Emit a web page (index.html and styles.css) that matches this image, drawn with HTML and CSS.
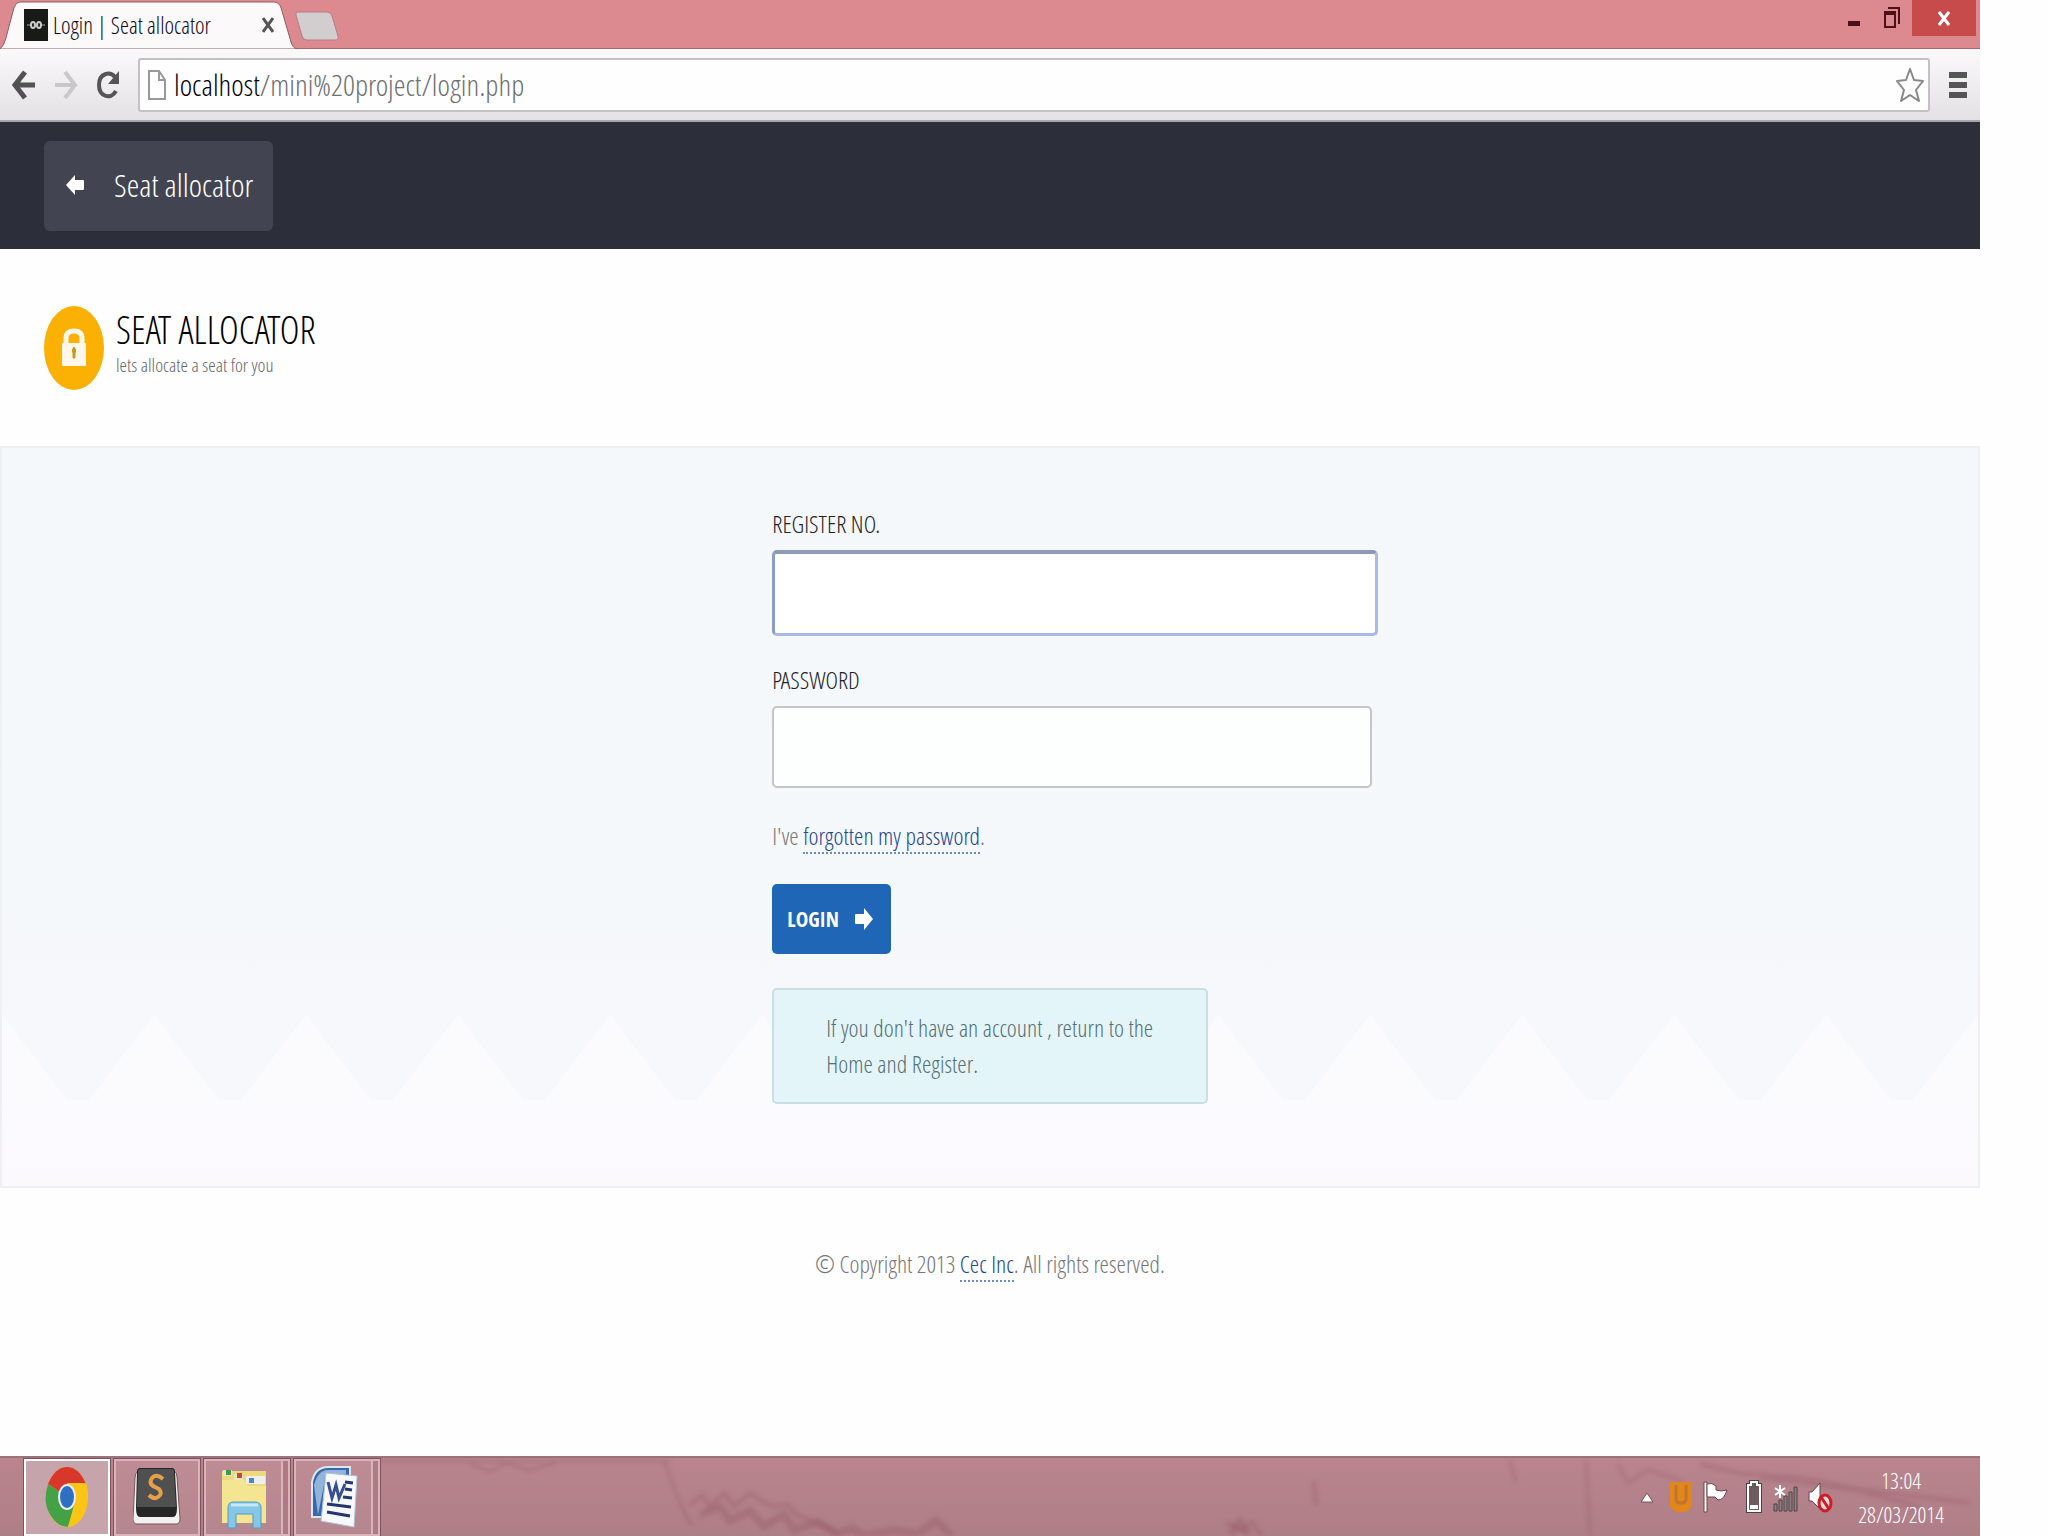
FILE: index.html
```html
<!DOCTYPE html>
<html lang="en">

<head>
    <meta charset="UTF-8">
    <title>Login | Seat allocator</title>
    <link rel="stylesheet" href="styles.css">
</head>

<body>

    <div class="screen">
        <div class="titlebar">
            <div class="tab">
                <svg class="tab-shape" viewBox="0 0 300 49" preserveAspectRatio="none" aria-hidden="true">
                    <path d="M0 49 Q4 46 6 38 L14 8 Q16 2 20 2 H276 Q281 2 283 8 L293 42 Q295 49 300 49Z" fill="#fbf9fa" stroke="#8f5b62" />
                </svg>
                <svg class="favicon" viewBox="0 0 24 32" aria-hidden="true">
                    <rect width="24" height="32" fill="#171a17" />
                    <path d="M3 16h3M18 16h3" stroke="#aaa" />
                    <ellipse cx="9" cy="16" rx="2" ry="3" fill="none" stroke="#ccc" stroke-width="2" />
                    <ellipse cx="15" cy="16" rx="2" ry="3" fill="none" stroke="#ccc" stroke-width="2" />
                </svg>
                <span class="tab-title">Login | Seat allocator</span>
                <button class="tab-close" aria-label="Close tab">
                    <svg width="12" height="16" viewBox="0 0 12 16"><path d="M1 1l10 14M11 1L1 15" stroke="#555" stroke-width="3" /></svg>
                </button>
            </div>
            <button class="new-tab" aria-label="New tab">
                <svg width="44" height="30" viewBox="0 0 44 30"><path d="M3 1H32Q36 1 37 5L43 25Q44 29 40 29H12Q8 29 7 25L1 4Q0 1 3 1Z" fill="#d2cecf" stroke="#b77c84" /></svg>
            </button>
            <div class="window-buttons">
                <button class="win-btn" aria-label="Minimize">
                    <svg width="12" height="24" viewBox="0 0 12 24"><path d="M0 15h12v5H0z" fill="#4b1018" /></svg>
                </button>
                <button class="win-btn" aria-label="Restore">
                    <svg width="16" height="22" viewBox="0 0 16 22"><path d="M4 1h11v16M1 5h10v15H1zM1 7h10" fill="none" stroke="#4b1018" stroke-width="2" /></svg>
                </button>
                <button class="win-btn win-close" aria-label="Close">
                    <svg width="12" height="15" viewBox="0 0 12 15"><path d="M1 1l10 13M11 1L1 14" stroke="#fff" stroke-width="3" /></svg>
                </button>
            </div>
        </div>

        <div class="toolbar">
            <button class="nav-btn" aria-label="Back">
                <svg width="24" height="30" viewBox="0 0 24 30"><path d="M23 15H4M13 2L3 15l10 13" fill="none" stroke="#525252" stroke-width="5" /></svg>
            </button>
            <button class="nav-btn" aria-label="Forward">
                <svg width="24" height="30" viewBox="0 0 24 30"><path d="M1 15h19M11 2l10 13-10 13" fill="none" stroke="#c9c8c9" stroke-width="4" /></svg>
            </button>
            <button class="nav-btn" aria-label="Reload">
                <svg width="24" height="30" viewBox="0 0 24 30"><path d="M19 7C14 1 3 3 3 15s12 15 17 6" fill="none" stroke="#555" stroke-width="4" /><path d="M23 1v13H12z" fill="#555" /></svg>
            </button>
            <div class="omnibox">
                <svg width="18" height="30" viewBox="0 0 18 30" aria-hidden="true"><path d="M1 1h10l6 9v19H1zM11 1v9h6" fill="#fff" stroke="#999" stroke-width="2" /></svg>
                <span class="url"><span class="url-host">localhost</span>/mini%20project/login.php</span>
                <button class="star" aria-label="Bookmark this page">
                    <svg width="28" height="36" viewBox="0 0 28 36"><path d="M14 2l4 11 9 1-7 9 3 11-9-6-9 6 3-11-7-9 9-1z" fill="#fff" stroke="#888" stroke-width="2" stroke-linejoin="round" /></svg>
                </button>
            </div>
            <button class="menu-btn" aria-label="Menu">
                <svg width="20" height="28" viewBox="0 0 20 28"><path d="M1 4h18M1 14h18M1 24h18" stroke="#555" stroke-width="6" /></svg>
            </button>
        </div>

        <nav class="topnav">
            <a href="#" class="back-link">
                <svg width="18" height="20" viewBox="0 0 18 20" aria-hidden="true"><path d="M0 10L9 0v5h8q1 0 1 1v8q0 1-1 1H9v5z" fill="#fff" /></svg>
                Seat allocator
            </a>
        </nav>

        <header class="brand">
            <svg class="brand-icon" viewBox="0 0 60 84" aria-hidden="true">
                <ellipse cx="30" cy="42" rx="30" ry="42" fill="#fbb004" />
                <path d="M22 38V32Q22 25 30 25t8 7v6" fill="none" stroke="#fff8ea" stroke-width="5" />
                <rect x="18" y="37" width="24" height="23" rx="1" fill="#fff8ea" />
                <path d="M30 41q3 3 1 6v5h-2v-5q-2-3 1-6z" fill="#c99a22" stroke="#c99a22" />
            </svg>
            <div class="brand-text">
                <h1>SEAT ALLOCATOR</h1>
                <p>lets allocate a seat for you</p>
            </div>
        </header>

        <main class="panel">
            <form class="login-form">
                <label for="register">REGISTER NO.</label>
                <input type="text" id="register" class="active">

                <label for="password">PASSWORD</label>
                <input type="password" id="password">

                <p class="forgot">I've <a href="#">forgotten my password</a>.</p>

                <button type="button" class="login-btn">
                    LOGIN
                    <svg width="18" height="22" viewBox="0 0 18 22" aria-hidden="true"><path d="M18 11L9 0v6H1Q0 6 0 7v8q0 1 1 1h8v6z" fill="#fff" /></svg>
                </button>

                <div class="note">If you don't have an account , return to the Home and Register.</div>
            </form>
        </main>

        <footer class="copyright">© Copyright 2013 <a href="#">Cec Inc</a>. All rights reserved.</footer>

        <div class="taskbar">
            <!-- wallpaper showing through the bar -->
            <svg class="wallpaper" viewBox="0 0 1980 80" preserveAspectRatio="none" aria-hidden="true">
                <g fill="none" stroke="#8d4f5c" stroke-opacity=".3">
                    <path d="M380 3h290M470 6l20 8 16-9 24 8 26-8M664 3l8 22 10 26 10 18M1510 3l6 22M1586 3l4 77M1618 6l10 20 20-14 30 10 8 12" stroke-width="3" />
                    <path d="M690 48l12-10 8 12 14-14 10 14 16-14 14 10 12 4 12-2 8 10 14 6 12 4 12 6 8 10M1314 24l2 24M1226 66l16 8 10-8 10 14M1700 6l40 10 60 4 60 12 110 14M1760 20l100 14 60 16" stroke-width="4" />
                    <path d="M700 58l20-8 10 14 20-10 14 16 20-12 10 16 24-8 18 12 16-6 12 8 30-6 24 4 18-14 16 16M1230 78l10-12 8 12" stroke-width="8" />
                </g>
            </svg>

            <div class="apps">
                <button class="app running" aria-label="Google Chrome">
                    <svg width="44" height="64" viewBox="0 0 44 64">
                        <ellipse cx="22" cy="32" rx="21" ry="30" fill="#fbc516" />
                        <path d="M22 32L3 19Q10 2 22 2t19 17z" fill="#d8382b" />
                        <path d="M3 19Q-3 38 6 51q7 11 17 11l6-22-7-8z" fill="#45a146" />
                        <path d="M22 18h19q4 12 0 24-5 19-18 20l8-23z" fill="#fbc516" />
                        <ellipse cx="22" cy="32" rx="9" ry="13" fill="#e9edf5" />
                        <ellipse cx="22" cy="32" rx="7" ry="11" fill="#2f6fc0" />
                    </svg>
                </button>
                <button class="app" aria-label="Sublime Text">
                    <svg width="48" height="64" viewBox="0 0 48 64">
                        <path d="M5 6Q2 8 2 13L0 54q0 5 4 5h39q4 0 4-5L44 12q0-5-3-6z" fill="#f2f0f0" stroke="#7a555b" />
                        <path d="M7 3h32q3 0 3 4l2 36q0 9-4 9H7q-4 0-4-9L4 7q0-4 3-4z" fill="#262626" />
                        <path d="M7 4h32q2 0 2 3l2 35H4L5 7q0-3 2-3z" fill="#505050" />
                        <path d="M30 14q-7-6-11-1-4 6 3 9l4 2q4 5-1 8-4 3-9-2" fill="none" stroke="#e6a04a" stroke-width="4" />
                    </svg>
                </button>
                <button class="app stacked" aria-label="File Explorer">
                    <svg width="48" height="64" viewBox="0 0 48 64">
                        <path d="M2 6h44v52H2z" fill="#ecd979" />
                        <path d="M3 5h9v6H3zM14 9h9v6h-9z" fill="#e8e6c4" />
                        <path d="M6 5h5v5H6z" fill="#3d9a4a" /><path d="M17 8h5v5h-5z" fill="#c9472f" />
                        <path d="M26 11h19v8H26z" fill="#eee" /><path d="M29 13h5v5h-5z" fill="#4c88c6" />
                        <path d="M2 15h22l4 6h18v37H2z" fill="#f4e592" />
                        <path d="M8 63V43q0-6 5-6h22q6 0 6 6v20h-8V49H16v14z" fill="#86c6e6" stroke="#529cc3" />
                        <path d="M11 40h27" stroke="#c6e8f5" stroke-width="3" />
                    </svg>
                </button>
                <button class="app stacked" aria-label="Microsoft Word">
                    <svg width="48" height="64" viewBox="0 0 48 64">
                        <path d="M2 52V17Q5 2 18 2h22v50z" fill="#3768a9" stroke="#dce7f4" stroke-width="2" />
                        <path d="M4 20Q8 5 18 5h18v4L16 10 8 50z" fill="#91b3dc" />
                        <path d="M16 8l31 3-3 51-33-6z" fill="#f6f8fc" stroke="#b6c2d6" />
                        <path d="M18 17l4 16 4-13 3 13 6-14" fill="none" stroke="#344f93" stroke-width="3" />
                        <path d="M35 17l8 1M35 24l7 1M33 32l9 1M17 39l24 3M17 47l23 4" stroke="#25366c" stroke-width="3" />
                    </svg>
                </button>
            </div>

            <div class="tray">
                <svg class="tray-arrow" width="14" height="12" viewBox="0 0 14 12" aria-hidden="true"><path d="M1 11L7 2l6 9z" fill="#fff" stroke="#76525a" /></svg>
                <svg width="24" height="34" viewBox="0 0 24 34" aria-hidden="true"><path d="M1 2h22v25l-6 5H7l-6-5z" fill="#df861c" /><path d="M7 5v14q0 4 5 4t5-4V5" fill="none" stroke="#c4742a" stroke-width="3" /></svg>
                <svg width="26" height="34" viewBox="0 0 26 34" aria-hidden="true"><path d="M2 2h3v30H2z" fill="#fff" stroke="#6b4249" /><path d="M5 4q5-2 9 2v4q5 2 11 0-3 10-9 10l-3-3H5z" fill="#fff" stroke="#6b4249" /></svg>
                <svg class="battery" width="18" height="34" viewBox="0 0 18 34" aria-hidden="true"><path d="M3 5h3V2h6v3h3v26H3z" fill="#6d5a5d" stroke="#444" stroke-width="4" /><path d="M3 5h3V2h6v3h3v26H3z" fill="#6d5a5d" stroke="#fff" stroke-width="2" /><path d="M5 25h8v4H5z" fill="#fff" /></svg>
                <svg width="26" height="34" viewBox="0 0 26 34" aria-hidden="true"><path d="M2 31v-7h3v7zM7 31V20h3v11zM12 31V16h3v15zM17 31V12h3v19zM22 31V7h3v24z" fill="#8b8083" stroke="#4c4145" /><path d="M8 5v13M3 8l10 7M13 8L3 15" stroke="#fff" stroke-width="2" /></svg>
                <svg width="26" height="34" viewBox="0 0 26 34" aria-hidden="true"><path d="M2 12h3l8-9v26l-8-8H2z" fill="#fff" stroke="#6b4249" /><ellipse cx="18" cy="23" rx="6" ry="8" fill="#f1d9d9" stroke="#cf1e27" stroke-width="3" /><path d="M14 17l8 12" stroke="#cf1e27" stroke-width="3" /></svg>
                <div class="clock">13:04<br>28/03/2014</div>
            </div>
        </div>
    </div>

</body>

</html>
```

FILE: styles.css
```css
* {
    box-sizing: border-box;
}

body {
    margin: 0;
    padding-right: 68px;
    background: #fefefe;
    color: #333;
    font-family: "Open Sans Condensed Light", "Open Sans Condensed", "Liberation Sans Narrow", "Open Sans", sans-serif;
    font-size: 24px;
    font-weight: 300;
}

button {
    padding: 0;
    border: none;
    background: none;
    font: inherit;
    cursor: pointer;
}

svg {
    display: block;
    flex-shrink: 0;
}

.screen {
    display: flex;
    flex-direction: column;
    min-height: 100vh;
}

/* browser window */

.titlebar {
    display: flex;
    align-items: flex-start;
    height: 49px;
    background: #dd8990;
    border-bottom: 1px solid #a9666e;
}

.tab {
    position: relative;
    display: flex;
    align-items: center;
    width: 298px;
    height: 49px;
    padding: 0 24px;
}

.tab-shape {
    position: absolute;
    top: 0;
    left: 0;
    width: 100%;
    height: 100%;
}

.favicon {
    position: relative;
    width: 24px;
    height: 32px;
    margin-right: 5px;
}

.tab-title {
    position: relative;
    flex: 1;
    color: #100a14;
    font-size: 23px;
    white-space: nowrap;
}

.tab-close {
    position: relative;
}

.new-tab {
    margin-top: 11px;
    margin-left: -3px;
}

.window-buttons {
    display: flex;
    gap: 24px;
    margin-left: auto;
    padding-right: 4px;
}

.win-btn {
    display: flex;
    align-items: center;
    justify-content: center;
    height: 36px;
}

.win-close {
    width: 64px;
    margin-left: -12px;
    background: #c84b4c;
}

.toolbar {
    display: flex;
    align-items: center;
    height: 73px;
    padding: 0 12px;
    background: linear-gradient(#fbf9fa, #e4e1e5);
    border-bottom: 2px solid #a9a7ad;
}

.nav-btn {
    margin-right: 18px;
}

.omnibox {
    flex: 1;
    display: flex;
    align-items: center;
    height: 54px;
    padding: 0 4px 0 8px;
    background: #fefefe;
    border: 2px solid #c3c1c3;
    border-radius: 3px;
}

.url {
    flex: 1;
    margin-left: 8px;
    color: #707070;
    font-size: 30px;
}

.url-host {
    color: #000;
}

.menu-btn {
    margin-left: 18px;
}

/* login page */

.topnav {
    display: flex;
    align-items: center;
    height: 127px;
    padding: 0 44px;
    background: #2c2f3a;
}

.back-link {
    display: flex;
    align-items: center;
    gap: 30px;
    height: 90px;
    padding: 0 20px 2px 22px;
    border-radius: 6px;
    background: #424551;
    color: #fff;
    font-size: 32px;
    text-decoration: none;
}

.brand {
    display: flex;
    align-items: center;
    gap: 12px;
    height: 197px;
    padding: 0 44px;
}

.brand-icon {
    width: 60px;
    height: 84px;
}

.brand-text {
    padding-bottom: 10px;
}

.brand h1 {
    margin: 0;
    color: #000;
    font-size: 38px;
    font-weight: inherit;
    line-height: 44px;
}

.brand p {
    margin: 0;
    color: #666;
    font-size: 19px;
    line-height: 28px;
}

/* pale zigzag along the foot of the panel */
.panel {
    padding: 60px 0 82px calc(39% - 2px);
    border: 2px solid #eef0f4;
    background:
        linear-gradient(#fbfafe, #fbf9fc) 0 100% / 100% 86px no-repeat,
        conic-gradient(from 143deg at 50% 0, #fbfbfe 74deg, transparent 0) -76px calc(100% - 86px) / 152px 86px repeat-x,
        linear-gradient(#f4f8fb, #f6f8fc);
}

.login-form {
    display: flex;
    flex-direction: column;
    align-items: flex-start;
    width: 600px;
}

.login-form label {
    margin-bottom: 10px;
    color: #222;
    font-size: 24px;
    line-height: 32px;
}

.login-form input {
    width: 100%;
    height: 82px;
    margin-bottom: 28px;
    padding: 0 16px;
    border: 2px solid #c3c5c9;
    border-radius: 5px;
    background: #fdfefe;
    font: inherit;
}

.login-form input.active {
    width: 101%;
    height: 86px;
    border: 3px solid #a9b8e6;
    border-top: 4px solid #8c9ab8;
    border-left-color: #8a9cc9;
    background: #fff;
}

.forgot {
    margin: 2px 0 30px;
    color: #777;
    font-size: 24px;
    line-height: 36px;
}

.forgot a,
.copyright a {
    border-bottom: 2px dotted #6c8cc0;
    color: #234690;
    text-decoration: none;
}

.login-btn {
    display: flex;
    align-items: center;
    gap: 16px;
    height: 70px;
    margin-bottom: 34px;
    padding: 0 18px 0 15px;
    border-radius: 5px;
    background: #1f67b6;
    color: #fff;
    font-family: "Open Sans Condensed", "Liberation Sans Narrow", "Open Sans", sans-serif;
    font-size: 21px;
    font-weight: bold;
}

.note {
    width: 436px;
    padding: 20px 42px 20px 52px;
    border: 2px solid #c9dfe3;
    border-radius: 5px;
    background: #e4f5fa;
    color: #567072;
    font-size: 24px;
    line-height: 36px;
}

.copyright {
    padding: 58px 0;
    color: #777;
    font-size: 24px;
    line-height: 36px;
    text-align: center;
}

/* windows taskbar */

.taskbar {
    position: relative;
    display: flex;
    align-items: center;
    justify-content: space-between;
    height: 80px;
    margin-top: auto;
    padding: 0 36px 0 24px;
    border-top: 2px solid #9a747c;
    background: linear-gradient(#ba858d, #ae7e87);
}

.wallpaper {
    position: absolute;
    top: 0;
    left: 0;
    width: 100%;
    height: 100%;
    filter: blur(2px);
}

.apps {
    position: relative;
    display: flex;
    gap: 4px;
}

.app {
    display: flex;
    align-items: center;
    justify-content: center;
    width: 86px;
    height: 77px;
    border: 2px solid #d9b4bb;
    outline: 1px solid #80525b;
    background: rgba(255, 235, 240, 0.08);
}

.running {
    border-color: #fff;
    background: #c6a4ac;
}

.stacked {
    padding-right: 7px;
    box-shadow: inset -5px 0 #ad7a85, inset -7px 0 #d9b4bb;
}

.tray {
    position: relative;
    display: flex;
    align-items: center;
    gap: 9px;
}

.tray-arrow {
    margin-right: 6px;
}

.battery {
    margin-left: 8px;
}

.clock {
    margin-left: 16px;
    color: #fff;
    font-size: 22px;
    line-height: 34px;
    text-align: center;
}
```
